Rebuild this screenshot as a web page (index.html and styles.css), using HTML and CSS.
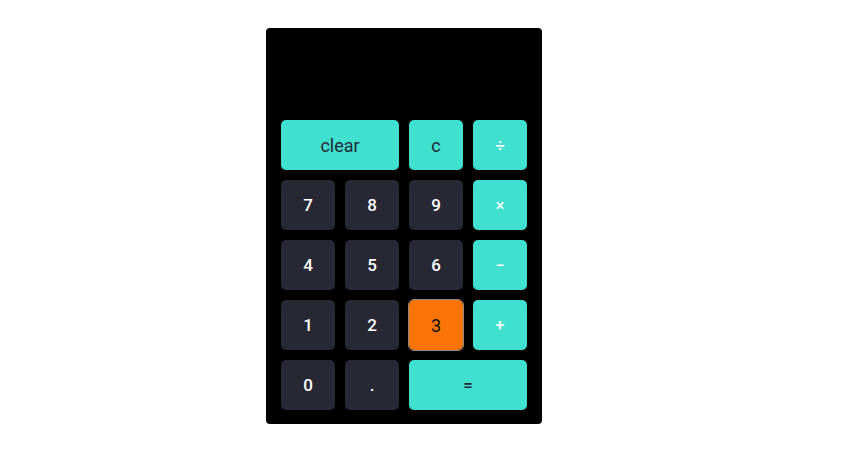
FILE: index.html
```html
<!DOCTYPE html>
<html>
<head>
<meta charset="utf-8">
<link rel="stylesheet" href="styles.css">
</head>
<body>
<div class="page">
  <div class="calc">
    <div class="display"></div>
    <button class="btn teal wide txt">clear</button>
    <button class="btn teal txt">c</button>
    <button class="btn teal op">÷</button>
    <button class="btn dark">7</button>
    <button class="btn dark">8</button>
    <button class="btn dark">9</button>
    <button class="btn teal op">×</button>
    <button class="btn dark">4</button>
    <button class="btn dark">5</button>
    <button class="btn dark">6</button>
    <button class="btn teal op">−</button>
    <button class="btn dark">1</button>
    <button class="btn dark">2</button>
    <button class="btn orange">3</button>
    <button class="btn teal op">+</button>
    <button class="btn dark">0</button>
    <button class="btn dark">.</button>
    <button class="btn teal wide">=</button>
  </div>
</div>
</body>
</html>
```
FILE: styles.css
```css
html, body {
  margin: 0;
  padding: 0;
  background: #ffffff;
}
.page {
  padding: 28px 0 0 266px;
}
.calc {
  width: 246px;
  padding: 15px 15px 14px;
  background: #000000;
  border-radius: 4px;
  display: grid;
  grid-template-columns: repeat(4, 54px);
  grid-template-rows: 67px;
  grid-auto-rows: 50px;
  gap: 10px;
}
.display {
  grid-column: 1 / -1;
}
.btn {
  border: none;
  border-radius: 5px;
  font-family: Roboto, "Liberation Sans", sans-serif;
  font-size: 17px;
  font-weight: 500;
  padding: 0;
  margin: 0;
  cursor: pointer;
}
.wide {
  grid-column: span 2;
}
.teal {
  background: #40e0d0;
  color: #262834;
}
.teal.txt {
  font-size: 18px;
  font-weight: 400;
}
.teal.op {
  color: #ffffff;
  font-size: 16px;
}
.dark {
  background: #262834;
  color: #ffffff;
}
.orange {
  background: #f97306;
  color: #111111;
  font-size: 18px;
  font-weight: 400;
  outline: 1px solid #8a8a8a;
}
```
